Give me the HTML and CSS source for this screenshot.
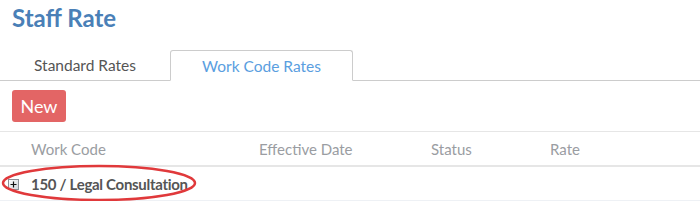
FILE: index.html
```html
<!DOCTYPE html>
<html>
<head>
<meta charset="utf-8">
<link rel="stylesheet" href="styles.css">
</head>
<body>
<h1 class="title">Staff Rate</h1>
<div class="tabs">
  <div class="tab">Standard Rates</div>
  <div class="tab active">Work Code Rates</div>
  <div class="tab-rest"></div>
</div>
<div class="toolbar">
  <button class="btn-new">New</button>
</div>
<div class="table">
  <div class="row head">
    <div class="cell">Work Code</div>
    <div class="cell">Effective Date</div>
    <div class="cell">Status</div>
    <div class="cell">Rate</div>
  </div>
  <div class="row body">
    <span class="expander"><svg width="11" height="11" viewBox="0 0 11 11"><defs><linearGradient id="g" x1="0" y1="0" x2="1" y2="1"><stop offset="0" stop-color="#ffffff"/><stop offset="1" stop-color="#cfd4da"/></linearGradient></defs><rect x="0.5" y="0.5" width="10" height="10" fill="url(#g)" stroke="#8a8f96"/><path d="M2.5 5.5h6M5.5 2.5v6" stroke="#111" stroke-width="1.2"/></svg></span>
    <div class="cell code">150 / Legal Consultation</div>
    <div class="cell"></div>
    <div class="cell"></div>
    <div class="cell"></div>
    <svg class="ring" width="198" height="40" viewBox="0 0 198 40"><ellipse cx="99" cy="19" rx="96" ry="17" fill="none" stroke="#e0393b" stroke-width="2.5"/></svg>
  </div>
</div>
</body>
</html>
```

FILE: styles.css
```css
html, body {
  margin: 0;
  padding: 0;
  background: #fff;
  font-family: Lato, "Open Sans", sans-serif;
}
.title {
  margin: 0;
  padding: 4px 0 0 12px;
  height: 46px;
  box-sizing: border-box;
  font-size: 24px;
  line-height: 28px;
  font-weight: 700;
  color: #4a80b7;
}
.tabs {
  display: flex;
  height: 31px;
  margin-top: 4px;
}
.tab {
  box-sizing: border-box;
  font-size: 15.5px;
  line-height: 31px;
  color: #555;
  border-bottom: 1px solid #cccccc;
  white-space: nowrap;
  text-align: center;
}
.tab:first-child {
  width: 170px;
}
.tab.active {
  width: 183px;
  color: #5a9ee0;
  border: 1px solid #cccccc;
  border-bottom-color: #fff;
  border-radius: 3px 3px 0 0;
}
.tab-rest {
  flex: 1;
  border-bottom: 1px solid #cccccc;
}
.toolbar {
  padding: 9px 0 0 12px;
  height: 50px;
  box-sizing: border-box;
}
.btn-new {
  display: block;
  width: 54px;
  height: 32px;
  padding: 0;
  border: none;
  border-radius: 3px;
  background: #e36565;
  color: #fff;
  font-family: Lato, "Open Sans", sans-serif;
  font-size: 18px;
  line-height: 32px;
}
.table {
  border-top: 1px solid #e6e6e6;
}
.row {
  position: relative;
  display: grid;
  grid-template-columns: 228px 172px 119px 1fr;
  padding-left: 31px;
  align-items: center;
}
.row.head {
  height: 33px;
  border-bottom: 2px solid #e6e6e6;
  color: #9a9da2;
  font-size: 15px;
}
.row.body {
  height: 33px;
  border-bottom: 1px solid #eef1f5;
  font-size: 15px;
  color: #555;
}
.code {
  font-weight: 700;
  letter-spacing: -0.3px;
  white-space: nowrap;
}
.expander {
  position: absolute;
  left: 8px;
  top: 12px;
  width: 11px;
  height: 11px;
  line-height: 0;
}
.ring {
  position: absolute;
  left: 0;
  top: -3px;
}
```
